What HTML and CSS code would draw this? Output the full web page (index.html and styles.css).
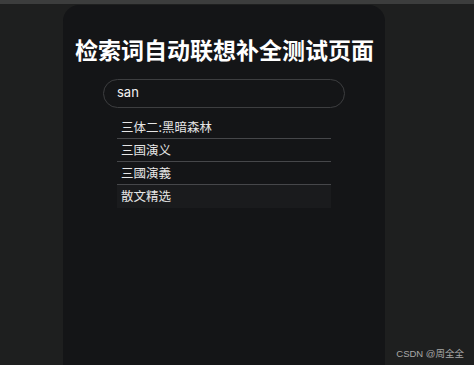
FILE: index.html
```html
<!DOCTYPE html>
<html lang="zh">
<head>
<meta charset="utf-8">
<link rel="stylesheet" href="styles.css">
</head>
<body>
<div class="topbar"></div>
<div class="stage">
  <main class="card">
    <h1 class="title">检索词自动联想补全测试页面</h1>
    <div class="search">
      <input class="search-input" type="text" value="san">
    </div>
    <ul class="suggest">
      <li class="item">三体二:黑暗森林</li>
      <li class="item">三国演义</li>
      <li class="item">三國演義</li>
      <li class="item active">散文精选</li>
    </ul>
  </main>
</div>
<div class="watermark">CSDN @周全全</div>
</body>
</html>
```
FILE: styles.css
```css
html, body {
  margin: 0;
  padding: 0;
  height: 100%;
  overflow: hidden;
}
body {
  background: #1e1f1f;
  font-family: "Noto Sans CJK SC", "Liberation Sans", sans-serif;
  color: #e8e8e8;
  position: relative;
}
.topbar {
  height: 4px;
  background: #3c3d3d;
}
.stage {
  padding-top: 1px;
  padding-left: 63px;
}
.card {
  width: 322px;
  height: 360px;
  background: #141517;
  border-radius: 16px 16px 0 0;
  display: flex;
  flex-direction: column;
  box-sizing: border-box;
  padding-top: 31px;
}
.title {
  margin: 0;
  font-family: "Inter", "Noto Sans CJK SC", sans-serif;
  font-size: 23px;
  line-height: 30px;
  font-weight: 700;
  color: #ffffff;
  text-align: center;
  padding-left: 1px;
}
.search {
  margin: 12px 0 0 40px;
  width: 242px;
}
.search-input {
  box-sizing: border-box;
  width: 242px;
  height: 29px;
  border: 1px solid #3d3e40;
  border-radius: 15px;
  background: #141517;
  color: #f2f2f2;
  font-family: "Inter", "Liberation Sans", sans-serif;
  font-size: 13px;
  padding: 0 0 2px 13px;
  outline: none;
}
.suggest {
  list-style: none;
  margin: 8px 0 0 54px;
  padding: 0;
  width: 214px;
}
.item {
  height: 23px;
  line-height: 22px;
  font-size: 12.5px;
  padding-left: 4px;
  color: #e6e6e6;
  border-bottom: 1px solid #46474a;
  box-sizing: border-box;
}
.item.active {
  border-bottom: none;
  background: #1a1b1d;
}
.watermark {
  position: absolute;
  right: 10px;
  bottom: 5px;
  font-family: "Liberation Sans", "Noto Sans CJK SC", sans-serif;
  font-size: 9.5px;
  color: #a8a8a8;
}
```
